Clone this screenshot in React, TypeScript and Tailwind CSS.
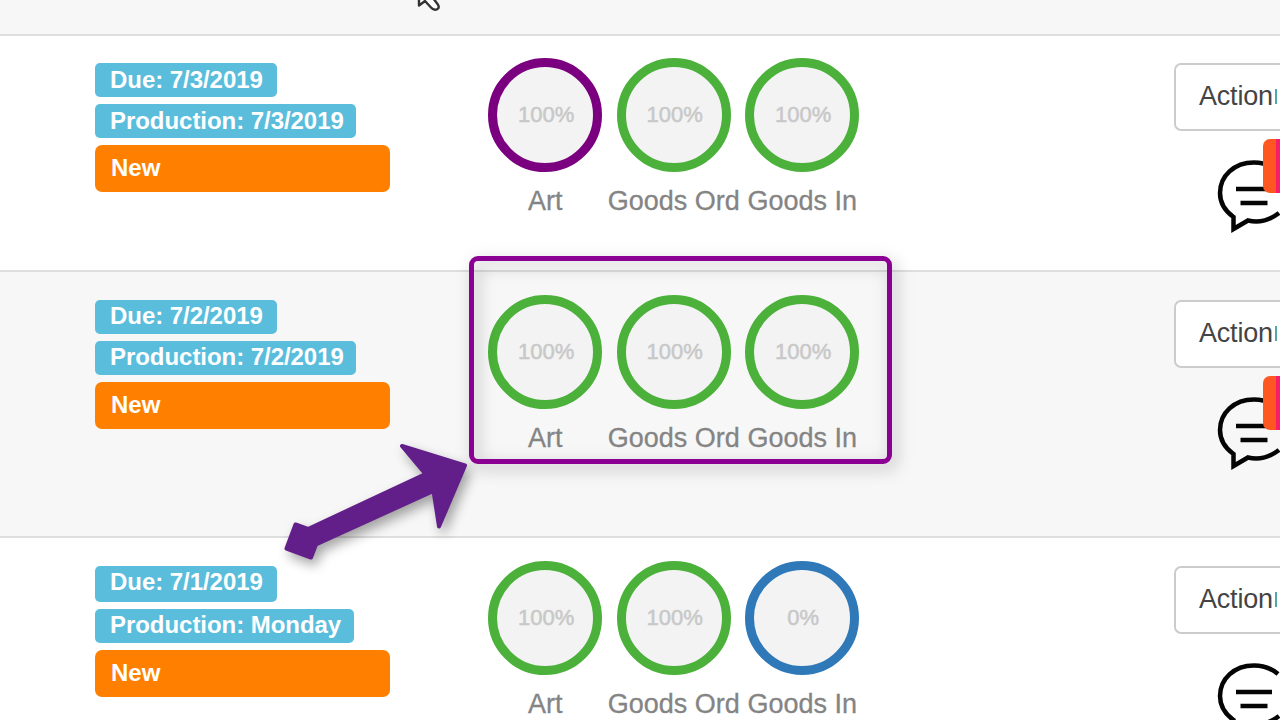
import React from "react";

type Stage = { pct: string; label: string; ring: string };
type Job = {
  due: string;
  production: string;
  stages: Stage[];
  alert: boolean;
  box: string;
  dueBox: string;
  productionBox: string;
};

const GREEN = "border-[#4bb13a]";
const PURPLE = "border-[#7b007f]";
const BLUE = "border-[#2f79b9]";

const stages = (art: string, goodsIn: string, pct = "100%"): Stage[] => [
  { pct: "100%", label: "Art", ring: art },
  { pct: "100%", label: "Goods Ord", ring: GREEN },
  { pct, label: "Goods In", ring: goodsIn },
];

const jobs: Job[] = [
  { due: "7/3/2019", production: "7/3/2019", stages: stages(PURPLE, GREEN), alert: true, box: "h-[236px] bg-white pt-[22px]", dueBox: "h-[34px] pb-[1px]", productionBox: "h-[34px] pb-[1px]" },
  { due: "7/2/2019", production: "7/2/2019", stages: stages(GREEN, GREEN), alert: true, box: "h-[266px] bg-[#f7f7f7] pt-[23px]", dueBox: "h-[34px] pb-[2px]", productionBox: "h-[34px] pb-[2px]" },
  { due: "7/1/2019", production: "Monday", stages: stages(GREEN, BLUE, "0%"), alert: false, box: "h-[266px] bg-white pt-[23px]", dueBox: "h-[36px] pb-[4px]", productionBox: "h-[34px] pb-[2px]" },
];

function Badge({ children, size }: { children: React.ReactNode; size: string }) {
  return (
    <div className={`flex items-center rounded-[5px] bg-[#5abddc] pl-[15px] text-[24px] font-bold leading-none tracking-[-0.05px] whitespace-nowrap text-white ${size}`}>
      {children}
    </div>
  );
}

function Bubble() {
  return (
    <svg className="block h-[74px] w-[64px]" viewBox="0 0 64 74" fill="none" stroke="#050505" strokeWidth="4.500">
      <path d="M62 11 C55 5 47 2.500 38 2.500 C18 2.500 4 16 4 33 C4 43 9 51 17.500 57 V69 L32 60.500 C43 63 54 60 63 53" />
      <path d="M20 29 H56 M24.500 43 H51.500" />
    </svg>
  );
}

function Row({ job }: { job: Job }) {
  return (
    <section className={`flex w-full shrink-0 items-start border-t-2 border-[#dedede] pl-[95px] ${job.box}`}>
      <div className="mt-[5px] flex w-[386px] flex-col items-start gap-[7px]">
        <Badge size={`pr-[14px] ${job.dueBox}`}>Due: {job.due}</Badge>
        <Badge size={`pr-[12.5px] ${job.productionBox}`}>Production: {job.production}</Badge>
        <div className="flex h-[47px] w-[295px] items-center rounded-[7px] bg-[#ff8000] pb-[1px] pl-[16px] text-[24px] font-bold leading-none text-white">
          New
        </div>
      </div>
      <div className="flex">
        {job.stages.map((s) => (
          <div key={s.label} className="flex w-[128.5px] flex-col items-center">
            <div className={`flex size-[114px] items-center justify-center rounded-full border-[9px] bg-[#f3f3f3] pl-[2px] pb-[1px] text-[22px] leading-none text-[#c8c8c8] [-webkit-text-stroke:0.5px_#c8c8c8] ${s.ring}`}>
              {s.pct}
            </div>
            <div className="mt-[15px] text-[27px] leading-[28px] whitespace-nowrap text-[#848484] [-webkit-text-stroke:0.3px_#848484]">{s.label}</div>
          </div>
        ))}
      </div>
      <div className="ml-auto mt-[5px] w-[106px]">
        <div className="flex h-[68px] items-center rounded-l-[7px] border-2 border-r-0 border-[#cccccc] bg-white pb-[1px] pl-[23px] text-[27px] leading-none tracking-[-0.2px] text-[#444444]">
          <span>Action</span>
          <span className="ml-[2px] h-[15px] w-[2px] bg-[#4fa9a9]" />
        </div>
        <div className="relative ml-[42px] mt-[29px]">
          <Bubble />
          {job.alert && (
            <div className="absolute -top-[21px] right-0 flex h-[54px] w-[17px] overflow-hidden rounded-l-[7px] bg-[#ff5722]">
              <div className="ml-auto h-full w-[4px] bg-[#f91d68]" />
            </div>
          )}
        </div>
      </div>
    </section>
  );
}

export default function App() {
  return (
    <main className="relative flex h-[720px] w-[1280px] flex-col overflow-hidden bg-white font-['Liberation_Sans',Arial,sans-serif]">
      <header className="h-[34px] w-full shrink-0 bg-[#f7f7f7]" />
      {jobs.map((job) => (
        <Row key={job.due} job={job} />
      ))}

      <div className="absolute left-[469px] top-[256px] h-[208px] w-[423px] rounded-[9px] border-[5.5px] border-[#8b0092] drop-shadow-[4px_5px_8px_rgba(0,0,0,0.3)]" />

      <svg className="absolute left-[270px] top-[430px] h-[145px] w-[220px] drop-shadow-[4px_6px_6px_rgba(0,0,0,0.35)]" viewBox="270 430 220 145">
        <path d="M402 446 L465 465.500 L439 526.500 L433.500 491 L316 544.500 L311 557.500 L286.500 548.500 L295.500 524.500 L308 529 L425.500 474 Z" fill="#621f8a" stroke="#621f8a" strokeWidth="4" strokeLinejoin="round" />
      </svg>

      <svg className="absolute left-[410px] top-0 h-[14px] w-[36px]" viewBox="0 0 36 14" fill="#ffffff" stroke="#333333" strokeWidth="2.400" strokeLinejoin="round">
        <path d="M9 -12 V5.500 L15 1 L21 7.500 Q24 11 27.500 9 Q30 7.500 27.500 4 L23 -2 H31 Z" />
      </svg>
    </main>
  );
}
